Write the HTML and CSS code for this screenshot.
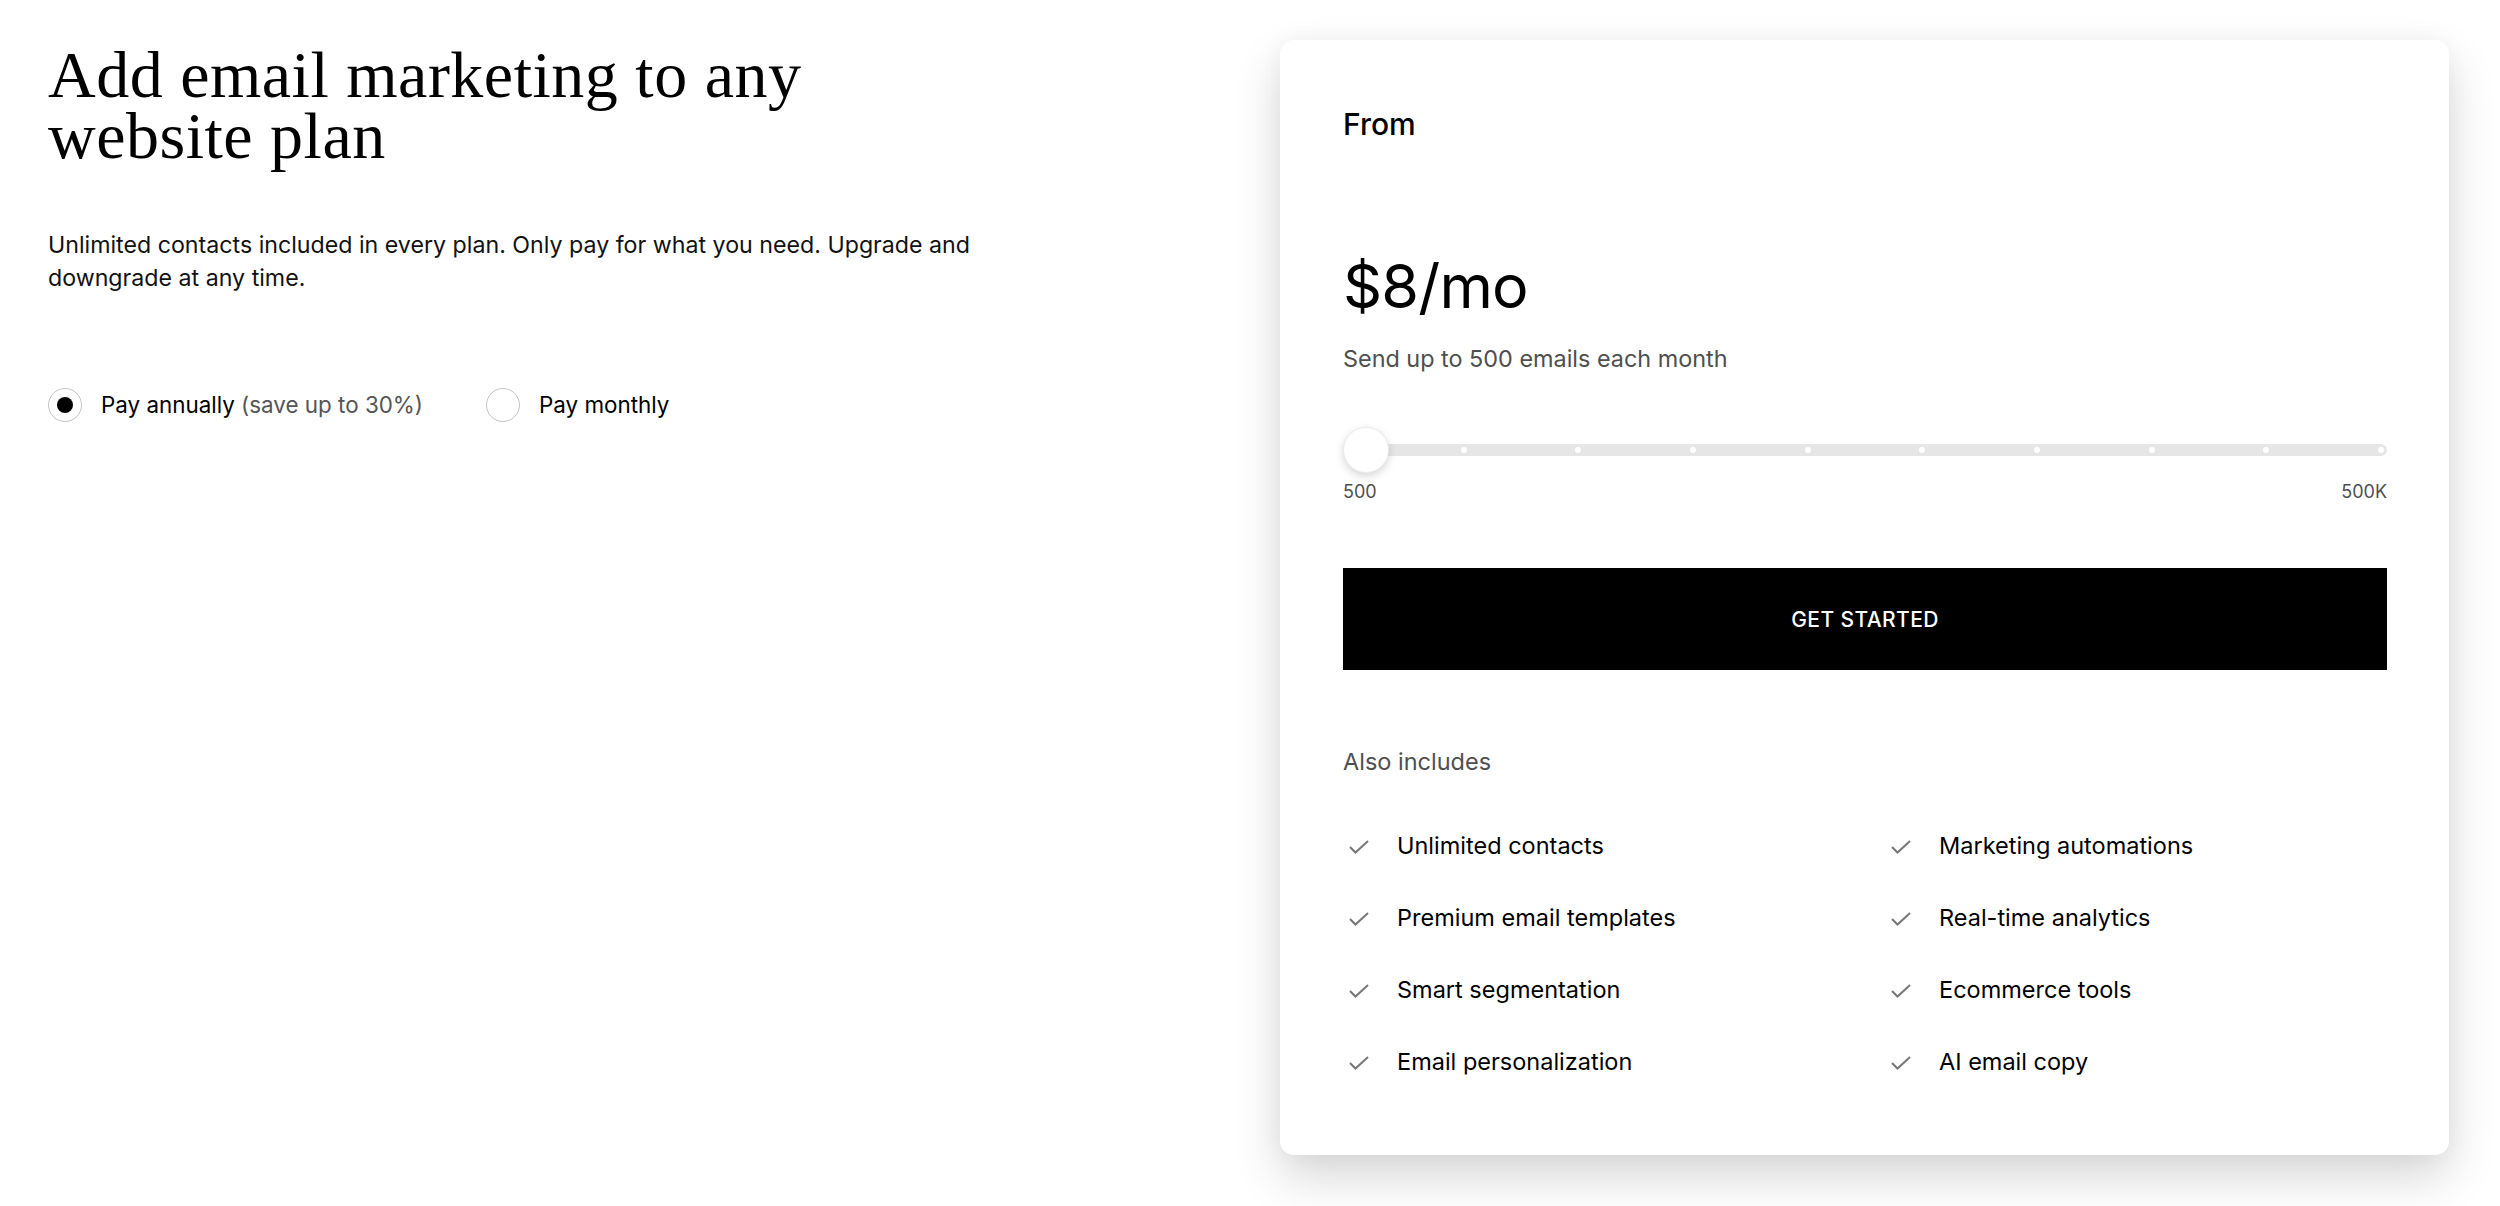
FILE: index.html
```html
<!DOCTYPE html>
<html lang="en">
<head>
<meta charset="utf-8">
<title>Email marketing pricing</title>
<link rel="stylesheet" href="styles.css">
</head>
<body>
<main class="page">
  <section class="intro">
    <h1 class="title">Add email marketing to any website plan</h1>
    <p class="lead">Unlimited contacts included in every plan. Only pay for what you need. Upgrade and downgrade at any time.</p>
    <div class="billing">
      <label class="radio">
        <span class="ring checked"><span class="dot"></span></span>
        <span class="radio-text">Pay annually <span class="muted">(save up to 30%)</span></span>
      </label>
      <label class="radio">
        <span class="ring"></span>
        <span class="radio-text">Pay monthly</span>
      </label>
    </div>
  </section>

  <section class="card">
    <div class="from">From</div>
    <div class="price">$8/mo</div>
    <div class="sub">Send up to 500 emails each month</div>

    <div class="slider">
      <div class="track">
        <span class="tick"></span><span class="tick"></span><span class="tick"></span><span class="tick"></span><span class="tick"></span>
        <span class="tick"></span><span class="tick"></span><span class="tick"></span><span class="tick"></span><span class="tick"></span>
      </div>
      <span class="thumb"></span>
    </div>
    <div class="range-labels"><span>500</span><span>500K</span></div>

    <button class="cta">GET STARTED</button>

    <div class="also">Also includes</div>
    <ul class="features">
      <li><svg class="check" viewBox="0 0 20 14"><path d="M1 7 L6.5 12.5 L19 1"/></svg><span>Unlimited contacts</span></li>
      <li><svg class="check" viewBox="0 0 20 14"><path d="M1 7 L6.5 12.5 L19 1"/></svg><span>Marketing automations</span></li>
      <li><svg class="check" viewBox="0 0 20 14"><path d="M1 7 L6.5 12.5 L19 1"/></svg><span>Premium email templates</span></li>
      <li><svg class="check" viewBox="0 0 20 14"><path d="M1 7 L6.5 12.5 L19 1"/></svg><span>Real-time analytics</span></li>
      <li><svg class="check" viewBox="0 0 20 14"><path d="M1 7 L6.5 12.5 L19 1"/></svg><span>Smart segmentation</span></li>
      <li><svg class="check" viewBox="0 0 20 14"><path d="M1 7 L6.5 12.5 L19 1"/></svg><span>Ecommerce tools</span></li>
      <li><svg class="check" viewBox="0 0 20 14"><path d="M1 7 L6.5 12.5 L19 1"/></svg><span>Email personalization</span></li>
      <li><svg class="check" viewBox="0 0 20 14"><path d="M1 7 L6.5 12.5 L19 1"/></svg><span>AI email copy</span></li>
    </ul>
  </section>
</main>
</body>
</html>
```

FILE: styles.css
```css
* { box-sizing: border-box; }

html, body {
  margin: 0;
  padding: 0;
  background: #ffffff;
}

body {
  font-family: Inter, "Liberation Sans", Arial, sans-serif;
  color: #000;
  width: 2500px;
  height: 1206px;
  overflow: hidden;
}

.page {
  display: grid;
  grid-template-columns: 1fr 1169px;
  padding: 0 51px 0 48px;
  align-items: start;
}

/* Left column */
.intro {
  padding-top: 44px;
}

.title {
  margin: 0;
  max-width: 840px;
  font-family: "Liberation Serif", "Times New Roman", serif;
  font-weight: 400;
  font-size: 66px;
  line-height: 61px;
  letter-spacing: 0.5px;
  color: #000;
}

.lead {
  margin: 63px 0 0;
  max-width: 990px;
  font-size: 23.2px;
  line-height: 33px;
  color: #111;
}

.billing {
  margin-top: 93px;
  display: flex;
  align-items: center;
  gap: 63px;
}

.radio {
  display: flex;
  align-items: center;
  gap: 19px;
  font-size: 22.4px;
  line-height: 34px;
  color: #000;
}

.ring {
  width: 34px;
  height: 34px;
  border-radius: 50%;
  border: 1.5px solid #c4c4c4;
  display: flex;
  align-items: center;
  justify-content: center;
  background: #fff;
}

.dot {
  width: 16px;
  height: 16px;
  border-radius: 50%;
  background: #000;
}

.muted { color: #555; }

/* Card */
.card {
  margin-top: 40px;
  background: #fff;
  border-radius: 14px;
  padding: 67px 62px 78px 63px;
  box-shadow: 0 22px 48px rgba(0, 0, 0, 0.16), 0 0 24px rgba(0, 0, 0, 0.04);
}

.from {
  font-size: 30px;
  line-height: 34px;
  font-weight: 500;
}

.price {
  margin-top: 108px;
  font-size: 61px;
  line-height: 74px;
  font-weight: 400;
  letter-spacing: -0.8px;
}

.sub {
  margin-top: 21px;
  font-size: 23.4px;
  line-height: 30px;
  color: #4f4f4f;
}

.slider {
  position: relative;
  margin-top: 53px;
  height: 46px;
  padding-top: 17px;
}

.track {
  height: 12px;
  border-radius: 6px;
  background: #e6e6e6;
  display: flex;
  align-items: center;
  justify-content: space-between;
  padding: 0 3px;
}

.tick {
  width: 6px;
  height: 6px;
  border-radius: 50%;
  background: #fff;
}

.thumb {
  position: absolute;
  left: 0;
  top: 0;
  width: 46px;
  height: 46px;
  border-radius: 50%;
  background: #fff;
  border: 1px solid #ececec;
  box-shadow: 0 3px 9px rgba(0, 0, 0, 0.17);
}

.range-labels {
  margin-top: 7px;
  display: flex;
  justify-content: space-between;
  font-size: 18px;
  line-height: 24px;
  color: #4f4f4f;
}

.cta {
  display: block;
  width: 100%;
  margin-top: 64px;
  height: 102px;
  border: 0;
  border-radius: 0;
  background: #000;
  color: #fff;
  font-family: Inter, "Liberation Sans", Arial, sans-serif;
  font-size: 21px;
  font-weight: 500;
  letter-spacing: 0.4px;
}

.also {
  margin-top: 77px;
  font-size: 23.5px;
  line-height: 30px;
  color: #4f4f4f;
}

.features {
  list-style: none;
  margin: 53px 0 0;
  padding: 0;
  display: grid;
  grid-template-columns: 1fr 1fr;
  column-gap: 40px;
  row-gap: 41px;
}

.features li {
  display: flex;
  align-items: center;
  gap: 28px;
  padding-left: 6px;
  font-size: 23.5px;
  line-height: 31px;
  color: #000;
}

.check {
  width: 20px;
  height: 14px;
  flex: none;
  margin-top: 2px;
  fill: none;
  stroke: #777;
  stroke-width: 2;
}
```
